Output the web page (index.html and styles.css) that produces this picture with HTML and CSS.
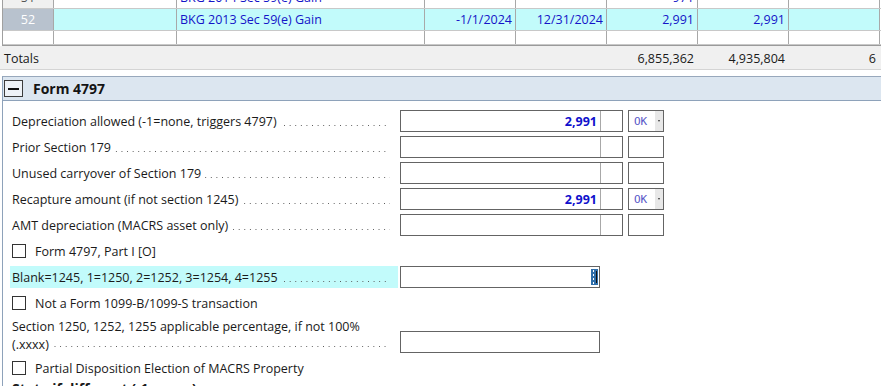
FILE: index.html
```html
<!DOCTYPE html>
<html>
<head>
<meta charset="utf-8">
<link rel="stylesheet" href="styles.css">
</head>
<body>
<div class="grid">
  <div class="grow r51">
    <div class="c num">51</div><div class="c"></div><div class="c txt">BKG 2014 Sec 59(e) Gain</div><div class="c"></div><div class="c"></div><div class="c rt">971</div><div class="c"></div><div class="c"></div>
  </div>
  <div class="grow sel">
    <div class="c num">52</div><div class="c"></div><div class="c txt">BKG 2013 Sec 59(e) Gain</div><div class="c rt">-1/1/2024</div><div class="c rt">12/31/2024</div><div class="c rt">2,991</div><div class="c rt">2,991</div><div class="c"></div>
  </div>
  <div class="grow empty">
    <div class="c num"></div><div class="c"></div><div class="c"></div><div class="c"></div><div class="c"></div><div class="c"></div><div class="c"></div><div class="c"></div>
  </div>
</div>
<div class="totals">
  <div class="tlabel">Totals</div>
  <div class="tval">6,855,362</div>
  <div class="tval">4,935,804</div>
  <div class="tval">6</div>
</div>
<div class="section">
  <div class="shead">
    <span class="toggle"><span class="minus"></span></span>
    <span class="stitle">Form 4797</span>
  </div>
  <div class="sbody">
    <div class="row">
      <div class="label"><span class="ltext">Depreciation allowed (-1=none, triggers 4797)</span><span class="dots"></span></div>
      <div class="field"><span class="main val">2,991</span><span class="small"></span></div>
      <div class="ok">OK<span class="arrow"></span></div>
    </div>
    <div class="row">
      <div class="label"><span class="ltext">Prior Section 179</span><span class="dots"></span></div>
      <div class="field"><span class="main"></span><span class="small"></span></div>
      <div class="box"></div>
    </div>
    <div class="row">
      <div class="label"><span class="ltext">Unused carryover of Section 179</span><span class="dots"></span></div>
      <div class="field"><span class="main"></span><span class="small"></span></div>
      <div class="box"></div>
    </div>
    <div class="row">
      <div class="label"><span class="ltext">Recapture amount (if not section 1245)</span><span class="dots"></span></div>
      <div class="field"><span class="main val">2,991</span><span class="small"></span></div>
      <div class="ok">OK<span class="arrow"></span></div>
    </div>
    <div class="row">
      <div class="label"><span class="ltext">AMT depreciation (MACRS asset only)</span><span class="dots"></span></div>
      <div class="field"><span class="main"></span><span class="small"></span></div>
      <div class="box"></div>
    </div>
    <div class="row check">
      <span class="cb"></span><span class="ctext">Form 4797, Part I [O]</span>
    </div>
    <div class="row">
      <div class="label hl"><span class="ltext">Blank=1245, 1=1250, 2=1252, 3=1254, 4=1255</span><span class="dots"></span></div>
      <div class="wide focus"><span class="caret"></span></div>
    </div>
    <div class="row check">
      <span class="cb"></span><span class="ctext">Not a Form 1099-B/1099-S transaction</span>
    </div>
    <div class="row tall">
      <div class="label two">
        <div class="line1">Section 1250, 1252, 1255 applicable percentage, if not 100%</div>
        <div class="line2"><span class="ltext">(.xxxx)</span><span class="dots"></span></div>
      </div>
      <div class="wide"></div>
    </div>
    <div class="row check last">
      <span class="cb"></span><span class="ctext">Partial Disposition Election of MACRS Property</span>
    </div>
    <div class="subhead">State if different (-1=none)</div>
  </div>
</div>
</body>
</html>
```

FILE: styles.css
```css
html, body {
  margin: 0;
  padding: 0;
  background: #ffffff;
  overflow: hidden;
}
body {
  font-family: "Open Sans", "Noto Sans", "DejaVu Sans", sans-serif;
  font-size: 12.5px;
  color: #1a1a1a;
  width: 881px;
  height: 386px;
}

/* ---------- grid ---------- */
.grid {
  margin-left: 2px;
  margin-top: -13px;
  border-left: 1px solid #a0a0a0;
  border-bottom: 1px solid #9a9a9a;
  width: 878px;
}
.grow {
  display: grid;
  grid-template-columns: 51px 123px 248px 91px 91px 91px 91px 91px;
  height: 22px;
  border-bottom: 1px solid #c8c8c8;
  box-sizing: border-box;
}
.grow.empty {
  height: 14px;
}
.c {
  border-right: 1px solid #a8a8a8;
  box-sizing: border-box;
  display: flex;
  align-items: center;
  padding: 0 3px;
  color: #1414c8;
  white-space: nowrap;
  overflow: hidden;
}
.c.rt { justify-content: flex-end; }
.c.num {
  justify-content: center;
  color: #555;
  background: #f0f0f0;
}
.grow.sel .c { background: #c2fbfb; }
.grow.sel .c.num { background: #b8c2ce; color: #ffffff; }
.grow.empty .c.num { background: #ffffff; }

.totals {
  display: grid;
  grid-template-columns: 606px 91px 91px 91px;
  height: 22px;
  background: #f0f0f0;
  border-bottom: 1px solid #d4d4d4;
  align-items: center;
  padding-top: 2px;
  box-sizing: content-box;
  height: 21px;
  color: #1a1a1a;
}
.tlabel { padding-left: 4px; }
.tval { text-align: right; padding-right: 3px; }

/* ---------- section ---------- */
.section {
  margin-top: 6px;
  margin-left: 2px;
  border-top: 1px solid #98a8bc;
  border-left: 1px solid #8ea2ba;
}
.shead {
  display: flex;
  align-items: center;
  height: 23px;
  background: #dce6f0;
  border-bottom: 1px solid #8ea2ba;
}
.toggle {
  width: 19px;
  height: 17px;
  box-sizing: border-box;
  border: 1px solid #3c3c3c;
  background: #eef2f7;
  margin-left: 1px;
  display: flex;
  align-items: center;
  justify-content: center;
}
.minus {
  width: 11px;
  height: 2px;
  background: #111;
}
.stitle {
  font-weight: 700;
  font-size: 14px;
  margin-left: 10px;
  color: #141414;
}
.sbody {
  padding-top: 9px;
}
.row {
  display: flex;
  align-items: center;
  height: 22px;
  margin-bottom: 4px;
}
.label {
  margin-left: 7px;
  width: 388px;
  height: 22px;
  box-sizing: border-box;
  padding: 0 8px 0 2px;
  display: flex;
  align-items: center;
  white-space: nowrap;
}
.label.hl { background: #c2fbfb; }
.dots {
  flex: 1;
  align-self: stretch;
  background-image: linear-gradient(to right, #5a5a5a 0 1px, transparent 1px 100%);
  background-size: 5.6px 1px;
  background-repeat: repeat-x;
  background-position: right 0 bottom 6px;
  margin-left: 3px;
}
.field {
  margin-left: 2px;
  display: flex;
  width: 223px;
  height: 22px;
  box-sizing: border-box;
  border: 1px solid #646464;
}
.main {
  width: 200px;
  border-right: 1px solid #a8a8a8;
  display: flex;
  align-items: center;
  justify-content: flex-end;
  padding-right: 3px;
  box-sizing: border-box;
}
.val {
  color: #1010cc;
  font-weight: 700;
}
.small { flex: 1; }
.box, .ok {
  margin-left: 5px;
  width: 36px;
  height: 22px;
  box-sizing: border-box;
  border: 1px solid #646464;
}
.ok {
  display: flex;
  align-items: center;
  padding-left: 5px;
  font-family: "DejaVu Sans Mono", "Liberation Mono", monospace;
  font-size: 11px;
  color: #5858c8;
  position: relative;
}
.arrow {
  position: absolute;
  right: 0;
  top: 0;
  bottom: 0;
  width: 8px;
  background: #e8e8e8;
}
.arrow::after {
  content: "";
  position: absolute;
  left: 3px;
  top: 9px;
  border-left: 1.5px solid transparent;
  border-right: 1.5px solid transparent;
  border-top: 2px solid #333;
}
.wide {
  margin-left: 2px;
  width: 200px;
  height: 22px;
  box-sizing: border-box;
  border: 1px solid #646464;
  display: flex;
  justify-content: flex-end;
  align-items: center;
}
.caret {
  width: 7px;
  height: 16px;
  margin-right: 1px;
  background:
    linear-gradient(#111, #111) 5px 2px / 1px 12px no-repeat,
    repeating-linear-gradient(to bottom, #ffffff 0 2px, transparent 2px 4px) 2px 1px / 1px 14px no-repeat,
    #2e6eaa;
}
.check {
  padding-left: 9px;
}
.cb {
  width: 14px;
  height: 14px;
  box-sizing: border-box;
  border: 1px solid #333;
  background: #fff;
}
.ctext { margin-left: 9px; }
.row.tall {
  height: 35px;
  align-items: flex-end;
}
.label.two {
  height: 35px;
  flex-direction: column;
  align-items: stretch;
  justify-content: flex-start;
}
.line1, .line2 {
  height: 17.5px;
  display: flex;
  align-items: center;
}
.row.last {
  margin-bottom: 0;
}
.subhead {
  font-weight: 700;
  font-size: 14px;
  line-height: 16px;
  margin-top: 2px;
  margin-left: 9px;
}
```
